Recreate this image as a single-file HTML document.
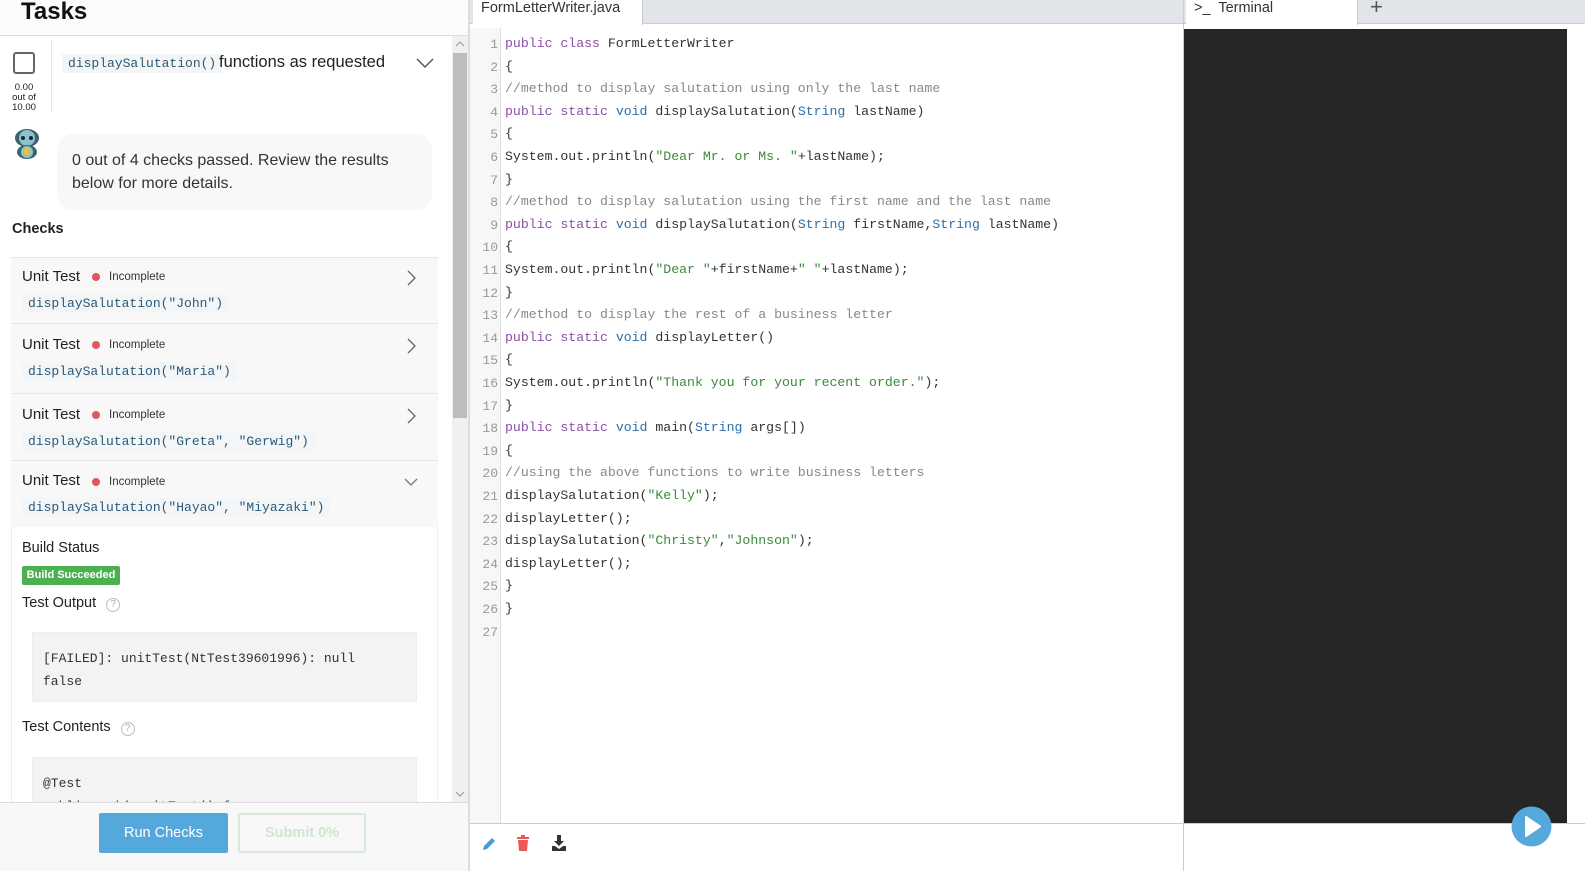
<!DOCTYPE html>
<html><head><meta charset="utf-8"><style>
*{box-sizing:border-box;margin:0;padding:0}
body{width:1585px;height:871px;overflow:hidden;background:#fff;font-family:"Liberation Sans",sans-serif;position:relative;color:#222}
.a{position:absolute}
.mono{font-family:"Liberation Mono",monospace}
.code{color:#2a5a7a;background:#f3f5f7;font-size:13px;padding:2px 6px}
.ut{position:absolute;left:11px;width:427px;background:#f8f8f8;border-top:1px solid #e6e6e6}
.ut .t{position:absolute;left:11px;top:10px;font-size:15px;color:#222}
.ut .dot{position:absolute;left:81px;top:15px;width:8px;height:8px;border-radius:50%;background:#e05560}
.ut .inc{position:absolute;left:98px;top:13px;font-size:11.5px;color:#333}
.ut .c{position:absolute;left:11px;top:36px}
.ut .ch{position:absolute;left:396px;top:12px}
.ln{position:absolute;left:470px;width:28px;text-align:right;font-size:13px;color:#999;font-family:"Liberation Mono",monospace}
.cl{position:absolute;left:505px;font-size:13.2px;font-family:"Liberation Mono",monospace;color:#333;white-space:pre}
.k{color:#8a4fa5}.ty{color:#2e6ea8}.s{color:#3a8a3a}.cm{color:#888}
</style></head><body>
<div class="a" style="left:0;top:0;width:468px;height:36px;background:#fbfbfb;border-bottom:1px solid #ddd"></div>
<div class="a" style="left:21px;top:-2px;font-size:24px;font-weight:bold;color:#111">Tasks</div>
<div class="a" style="left:13px;top:52px;width:22px;height:22px;border:2px solid #666;border-radius:3px"></div>
<div class="a" style="left:4px;top:83px;width:40px;text-align:center;font-size:9.5px;line-height:10px;color:#222">0.00<br>out of<br>10.00</div>
<div class="a" style="left:51px;top:40px;width:1px;height:72px;background:#e6e6e6"></div>
<div class="a mono code" style="left:62px;top:54px;">displaySalutation()</div>
<div class="a" style="left:219px;top:53px;font-size:16.5px;color:#222">functions as requested</div>
<svg class="a" style="left:416px;top:57px" width="18" height="12"><path d="M1 2 L9 10 L17 2" fill="none" stroke="#555" stroke-width="1.5"/></svg>
<svg class="a" style="left:11px;top:127px" width="32" height="33"><ellipse cx="16" cy="11" rx="12" ry="9" fill="#3c6470"/><circle cx="16" cy="11" r="8" fill="#8bc4d0"/><circle cx="12" cy="11" r="2" fill="#223"/><circle cx="20" cy="11" r="2" fill="#223"/><ellipse cx="16" cy="25" rx="10" ry="7" fill="#3c6470"/><ellipse cx="16" cy="25" rx="6" ry="6" fill="#8bc4d0"/><rect x="13" y="21" width="6" height="7" rx="1.5" fill="#e6c040"/></svg>
<div class="a" style="left:57px;top:134px;width:375px;height:76px;background:#f8f8f8;border-radius:16px"></div>
<div class="a" style="left:72px;top:149px;font-size:16px;line-height:23px;color:#333;width:350px">0 out of 4 checks passed. Review the results below for more details.</div>
<div class="a" style="left:12px;top:221px;font-size:14.5px;font-weight:bold;color:#222">Checks</div>

<div class="ut" style="top:257px;height:66px"><span class="t">Unit Test</span><span class="dot"></span><span class="inc">Incomplete</span><svg class="ch" width="9" height="16"><path d="M1 1 L8 8 L1 15" fill="none" stroke="#666" stroke-width="1.3"/></svg><span class="c mono code">displaySalutation("John")</span></div>
<div class="ut" style="top:323px;height:70px"><span class="t" style="top:12px">Unit Test</span><span class="dot" style="top:17px"></span><span class="inc" style="top:15px">Incomplete</span><svg class="ch" style="top:14px" width="9" height="16"><path d="M1 1 L8 8 L1 15" fill="none" stroke="#666" stroke-width="1.3"/></svg><span class="c mono code" style="top:38px">displaySalutation("Maria")</span></div>
<div class="ut" style="top:393px;height:67px"><span class="t" style="top:12px">Unit Test</span><span class="dot" style="top:17px"></span><span class="inc" style="top:15px">Incomplete</span><svg class="ch" style="top:14px" width="9" height="16"><path d="M1 1 L8 8 L1 15" fill="none" stroke="#666" stroke-width="1.3"/></svg><span class="c mono code" style="top:38px">displaySalutation("Greta", "Gerwig")</span></div>
<div class="ut" style="top:460px;height:67px"><span class="t" style="top:11px">Unit Test</span><span class="dot" style="top:17px"></span><span class="inc" style="top:15px">Incomplete</span><svg class="a" style="left:393px;top:17px" width="14" height="9"><path d="M1 1 L7 7 L13 1" fill="none" stroke="#777" stroke-width="1.3"/></svg><span class="c mono code" style="top:37px">displaySalutation("Hayao", "Miyazaki")</span></div>
<div class="a" style="left:11px;top:527px;width:1px;height:280px;background:#eee"></div>
<div class="a" style="left:437px;top:527px;width:1px;height:280px;background:#eee"></div>
<div class="a" style="left:22px;top:540px;font-size:14.5px;color:#222">Build Status</div>
<div class="a" style="left:22px;top:566px;width:98px;height:19px;background:#4cb050;border-radius:2px;color:#fff;font-size:11px;font-weight:bold;line-height:19px;text-align:center">Build Succeeded</div>
<div class="a" style="left:22px;top:595px;font-size:14.5px;color:#222">Test Output <span style="display:inline-block;width:14px;height:14px;border:1px solid #bbb;border-radius:50%;font-size:10px;color:#aaa;text-align:center;line-height:12px;margin-left:6px">?</span></div>
<div class="a mono" style="left:32px;top:632px;width:385px;height:70px;background:#f3f3f3;border:1px solid #eee;padding:14px 10px;font-size:13px;line-height:23px;color:#333">[FAILED]: unitTest(NtTest39601996): null<br>false</div>
<div class="a" style="left:22px;top:719px;font-size:14.5px;color:#222">Test Contents <span style="display:inline-block;width:14px;height:14px;border:1px solid #bbb;border-radius:50%;font-size:10px;color:#aaa;text-align:center;line-height:12px;margin-left:6px">?</span></div>
<div class="a mono" style="left:32px;top:757px;width:385px;height:50px;background:#f3f3f3;border:1px solid #eee;padding:14px 10px;font-size:13px;line-height:23px;color:#333;overflow:hidden">@Test<br>public void unitTest() {</div>
<div class="a" style="left:452px;top:36px;width:16px;height:767px;background:#f0f0f0"></div>
<div class="a" style="left:453px;top:53px;width:14px;height:365px;background:#bdbdbd"></div>
<svg class="a" style="left:455px;top:41px" width="10" height="6"><path d="M1 5 L5 1 L9 5" fill="none" stroke="#999"/></svg>
<svg class="a" style="left:455px;top:791px" width="10" height="6"><path d="M1 1 L5 5 L9 1" fill="none" stroke="#999"/></svg>
<div class="a" style="left:0;top:802px;width:468px;height:69px;background:#f8f8f8;border-top:1px solid #ddd"></div>
<div class="a" style="left:99px;top:813px;width:129px;height:40px;background:#55a8dc;border-radius:2px;color:#fff;font-size:14.5px;text-align:center;line-height:40px">Run Checks</div>
<div class="a" style="left:238px;top:813px;width:128px;height:40px;border:2px solid #d6ead6;border-radius:2px;color:#cfe6cf;font-size:14.5px;text-align:center;line-height:36px;font-weight:bold">Submit 0%</div>
<div class="a" style="left:468px;top:0;width:2px;height:871px;background:#ddd"></div>

<div class="a" style="left:470px;top:0;width:713px;height:24px;background:#e1e4e8;border-bottom:1px solid #ccc"></div>
<div class="a" style="left:473px;top:0;width:170px;height:25px;background:#fff;border-right:1px solid #ccc;font-size:14.5px;padding:0 0 0 8px;line-height:16px;color:#333">FormLetterWriter.java</div>
<div class="a" style="left:470px;top:28px;width:31px;height:795px;background:#f7f7f7;border-right:1px solid #ddd"></div>
<div class="ln" style="top:37px">1</div><div class="ln" style="top:59.6px">2</div><div class="ln" style="top:82.2px">3</div><div class="ln" style="top:104.8px">4</div><div class="ln" style="top:127.4px">5</div><div class="ln" style="top:150px">6</div><div class="ln" style="top:172.6px">7</div><div class="ln" style="top:195.2px">8</div><div class="ln" style="top:217.8px">9</div><div class="ln" style="top:240.4px">10</div><div class="ln" style="top:263px">11</div><div class="ln" style="top:285.6px">12</div><div class="ln" style="top:308.2px">13</div><div class="ln" style="top:330.8px">14</div><div class="ln" style="top:353.4px">15</div><div class="ln" style="top:376px">16</div><div class="ln" style="top:398.6px">17</div><div class="ln" style="top:421.2px">18</div><div class="ln" style="top:443.8px">19</div><div class="ln" style="top:466.4px">20</div><div class="ln" style="top:489px">21</div><div class="ln" style="top:511.6px">22</div><div class="ln" style="top:534.2px">23</div><div class="ln" style="top:556.8px">24</div><div class="ln" style="top:579.4px">25</div><div class="ln" style="top:602px">26</div><div class="ln" style="top:624.6px">27</div>
<div class="cl" style="top:36px"><span class="k">public class</span> FormLetterWriter</div>
<div class="cl" style="top:58.6px">{</div>
<div class="cl cm" style="top:81.2px">//method to display salutation using only the last name</div>
<div class="cl" style="top:103.8px"><span class="k">public static</span> <span class="ty">void</span> displaySalutation(<span class="ty">String</span> lastName)</div>
<div class="cl" style="top:126.4px">{</div>
<div class="cl" style="top:149px">System.out.println(<span class="s">"Dear Mr. or Ms. "</span>+lastName);</div>
<div class="cl" style="top:171.6px">}</div>
<div class="cl cm" style="top:194.2px">//method to display salutation using the first name and the last name</div>
<div class="cl" style="top:216.8px"><span class="k">public static</span> <span class="ty">void</span> displaySalutation(<span class="ty">String</span> firstName,<span class="ty">String</span> lastName)</div>
<div class="cl" style="top:239.4px">{</div>
<div class="cl" style="top:262px">System.out.println(<span class="s">"Dear "</span>+firstName+<span class="s">" "</span>+lastName);</div>
<div class="cl" style="top:284.6px">}</div>
<div class="cl cm" style="top:307.2px">//method to display the rest of a business letter</div>
<div class="cl" style="top:329.8px"><span class="k">public static</span> <span class="ty">void</span> displayLetter()</div>
<div class="cl" style="top:352.4px">{</div>
<div class="cl" style="top:375px">System.out.println(<span class="s">"Thank you for your recent order."</span>);</div>
<div class="cl" style="top:397.6px">}</div>
<div class="cl" style="top:420.2px"><span class="k">public static</span> <span class="ty">void</span> main(<span class="ty">String</span> args[])</div>
<div class="cl" style="top:442.8px">{</div>
<div class="cl cm" style="top:465.4px">//using the above functions to write business letters</div>
<div class="cl" style="top:488px">displaySalutation(<span class="s">"Kelly"</span>);</div>
<div class="cl" style="top:510.6px">displayLetter();</div>
<div class="cl" style="top:533.2px">displaySalutation(<span class="s">"Christy"</span>,<span class="s">"Johnson"</span>);</div>
<div class="cl" style="top:555.8px">displayLetter();</div>
<div class="cl" style="top:578.4px">}</div>
<div class="cl" style="top:601px">}</div>
<div class="a" style="left:470px;top:823px;width:713px;height:1px;background:#ccc"></div>
<svg class="a" style="left:481px;top:836px" width="16" height="16"><path d="M2 14 L3 10 L11 2 L14 5 L6 13 Z" fill="#4a9ad8"/></svg>
<svg class="a" style="left:516px;top:835px" width="14" height="17"><rect x="1" y="2" width="12" height="2" fill="#ea5858"/><rect x="5" y="0" width="4" height="2" fill="#ea5858"/><path d="M2 5 H12 L11 16 H3 Z" fill="#ea5858"/></svg>
<svg class="a" style="left:551px;top:835px" width="16" height="17"><path d="M6 0 H10 V6 H13 L8 11 L3 6 H6 Z" fill="#333"/><path d="M1 11 H4 L8 14 L12 11 H15 V16 H1 Z" fill="#333"/></svg>

<div class="a" style="left:1183px;top:0;width:402px;height:24px;background:#e1e4e8;border-bottom:1px solid #ccc"></div>
<div class="a" style="left:1183px;top:0;width:1px;height:871px;background:#ccc"></div>
<div class="a" style="left:1186px;top:0;width:172px;height:25px;background:#fff;border-right:1px solid #ccc;font-size:14.5px;padding-left:8px;line-height:16px;color:#333">&gt;_&nbsp; Terminal</div>
<div class="a" style="left:1370px;top:-6px;font-size:22px;color:#555;font-weight:300">+</div>
<div class="a" style="left:1184px;top:29px;width:383px;height:794px;background:#262626"></div>
<div class="a" style="left:1184px;top:823px;width:401px;height:1px;background:#ccc"></div>
<svg class="a" style="left:1511px;top:806px" width="41" height="41"><circle cx="20.5" cy="20.5" r="20" fill="#55a8dc"/><path d="M15 11 L29 20.5 L15 30 Z" fill="#fff" stroke="#fff" stroke-width="2" stroke-linejoin="round"/></svg>
</body></html>
